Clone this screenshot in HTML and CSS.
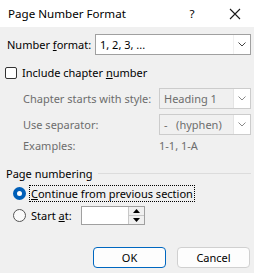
FILE: index.html
```html
<!DOCTYPE html>
<html lang="en">

<head>
    <meta charset="UTF-8">
    <meta name="viewport" content="width=device-width, initial-scale=1.0">
    <title>Page Number Format</title>
    <link rel="stylesheet" href="styles.css">
</head>

<body>
    <div class="dialog">
        <!-- Barra de titulo -->
        <div class="titlebar">
            <span class="title">Page Number Format</span>
            <span class="help">?</span>
            <span class="close">
                <svg width="12" height="12" viewBox="0 0 12 12"><path d="M1 1L11 11M11 1L1 11" stroke="#1a1a1a" stroke-width="1.1" fill="none"/></svg>
            </span>
        </div>

        <div class="content">
            <div class="row format-row">
                <span class="label">Number <u>f</u>ormat:</span>
                <div class="select">
                    <span class="select-text">1, 2, 3, ...</span>
                    <span class="select-btn">
                        <svg width="8" height="5" viewBox="0 0 8 5"><path d="M0.5 0.5L4 4L7.5 0.5" stroke="#444" stroke-width="1" fill="none"/></svg>
                    </span>
                </div>
            </div>

            <div class="row check-row">
                <span class="checkbox"></span>
                <span>Include chapter <u>n</u>umber</span>
            </div>

            <div class="row sub-row first">
                <span class="sub-label disabled">Chapter starts with style:</span>
                <div class="select small disabled-box">
                    <span class="select-text disabled">Heading 1</span>
                    <span class="select-btn">
                        <svg width="8" height="5" viewBox="0 0 8 5"><path d="M0.5 0.5L4 4L7.5 0.5" stroke="#8a8a8a" stroke-width="1" fill="none"/></svg>
                    </span>
                </div>
            </div>

            <div class="row sub-row">
                <span class="sub-label disabled">Use separator:</span>
                <div class="select small disabled-box">
                    <span class="select-text disabled">-&nbsp;&nbsp;&nbsp;(hyphen)</span>
                    <span class="select-btn">
                        <svg width="8" height="5" viewBox="0 0 8 5"><path d="M0.5 0.5L4 4L7.5 0.5" stroke="#8a8a8a" stroke-width="1" fill="none"/></svg>
                    </span>
                </div>
            </div>

            <div class="row examples-row">
                <span class="sub-label disabled">Examples:</span>
                <span class="disabled">1-1, 1-A</span>
            </div>

            <!-- Grupo de numeracion -->
            <div class="group-title">
                <span>Page numbering</span>
                <span class="group-line"></span>
            </div>

            <div class="row radio-row">
                <span class="radio checked"></span>
                <span class="focus"><u>C</u>ontinue from previous section</span>
            </div>

            <div class="row radio-row second">
                <span class="radio"></span>
                <span class="start-label">Start <u>a</u>t:</span>
                <div class="spin">
                    <span class="spin-input"></span>
                    <span class="spin-btns">
                        <span class="spin-btn"><svg width="7" height="4" viewBox="0 0 7 4"><path d="M0 4L3.5 0L7 4Z" fill="#000"/></svg></span>
                        <span class="spin-btn"><svg width="7" height="4" viewBox="0 0 7 4"><path d="M0 0L3.5 4L7 0Z" fill="#000"/></svg></span>
                    </span>
                </div>
            </div>

            <div class="buttons">
                <div class="btn default">OK</div>
                <div class="btn">Cancel</div>
            </div>
        </div>
    </div>
</body>

</html>
```

FILE: styles.css
```css
body {
    margin: 0;
    padding: 0;
    font-family: 'Noto Sans', 'Open Sans', sans-serif;
    font-size: 11px;
    color: #000;
    background-color: #f0f0f0;
    white-space: nowrap;
}

.dialog {
    width: 254px;
    height: 273px;
    overflow: hidden;
    background-color: #f0f0f0;
}

/* Barra de titulo */
.titlebar {
    height: 27px;
    background-color: #fff;
    display: flex;
    align-items: center;
    padding-left: 8px;
    font-size: 11.6px;
}

.title {
    flex: 1;
}

.help {
    width: 12px;
    margin-right: 31px;
    text-align: center;
}

.close {
    width: 12px;
    margin-right: 13px;
    display: flex;
    align-items: center;
}

.content {
    padding: 0 3px 0 5px;
}

.row {
    display: flex;
    align-items: center;
}

.format-row {
    margin-top: 7px;
}

.format-row .label {
    width: 88px;
    flex: none;
    margin-left: 2px;
}

/* Cajas desplegables */
.select {
    flex: 1;
    height: 21px;
    box-sizing: border-box;
    border: 1px solid #a0a0a0;
    background-color: #fff;
    display: flex;
    align-items: center;
}

.select-text {
    flex: 1;
    padding-left: 4px;
}

.select-btn {
    width: 16px;
    height: 19px;
    border-left: 1px solid #f0f0f0;
    display: flex;
    align-items: center;
    justify-content: center;
}

.select.small {
    flex: none;
    width: 92px;
}

.disabled-box {
    background-color: #f0f0f0;
    border-color: #cccccc;
}

.disabled-box .select-btn {
    background-color: #fff;
    border-left-color: #e4e4e4;
}

.disabled {
    color: #6d6d6d;
}

.check-row {
    margin-top: 9px;
    height: 17px;
}

.checkbox {
    width: 12px;
    height: 12px;
    box-sizing: border-box;
    border: 1px solid #333;
    border-radius: 2px;
    background-color: #fff;
    margin-right: 5px;
}

.sub-row {
    margin-top: 5px;
    padding-left: 18px;
}

.sub-row.first {
    margin-top: 7px;
}

.sub-label {
    width: 136px;
    flex: none;
}

.examples-row {
    margin-top: 2px;
    height: 17px;
    padding-left: 18px;
}

/* Grupo */
.group-title {
    display: flex;
    align-items: center;
    margin-top: 11px;
    margin-left: 1px;
    height: 17px;
}

.group-line {
    flex: 1;
    height: 1px;
    background-color: #dcdcdc;
    margin-left: 6px;
}

.radio-row {
    height: 19px;
    margin-top: 2px;
    padding-left: 8px;
}

.radio-row.second {
    margin-top: 1px;
    height: 22px;
}

.radio {
    width: 13px;
    height: 13px;
    box-sizing: border-box;
    border-radius: 50%;
    border: 1px solid #555;
    background-color: #fafafa;
    margin-right: 5px;
}

.radio.checked {
    border: 4px solid #005fb8;
    background-color: #fff;
}

.focus {
    outline: 1px dotted #000;
    padding: 0 1px;
    margin-left: -1px;
}

.start-label {
    width: 50px;
}

.spin {
    display: flex;
    width: 64px;
    height: 19px;
    box-sizing: border-box;
    border: 1px solid #a0a0a0;
    background-color: #fff;
}

.spin-input {
    flex: 1;
}

.spin-btns {
    width: 15px;
    display: flex;
    flex-direction: column;
    border-left: 1px solid #c8c8c8;
    background-color: #f0f0f0;
}

.spin-btn {
    flex: 1;
    display: flex;
    align-items: center;
    justify-content: center;
    border-bottom: 1px solid #c8c8c8;
}

.spin-btn:last-child {
    border-bottom: none;
}

/* Botones */
.buttons {
    display: flex;
    justify-content: flex-end;
    gap: 11px;
    margin-top: 21px;
    padding-right: 1px;
}

.btn {
    width: 73px;
    height: 21px;
    box-sizing: border-box;
    border: 1px solid #d0d0d0;
    border-radius: 4px;
    background-color: #fdfdfd;
    display: flex;
    align-items: center;
    justify-content: center;
}

.btn.default {
    border-color: #0067c0;
}
```
